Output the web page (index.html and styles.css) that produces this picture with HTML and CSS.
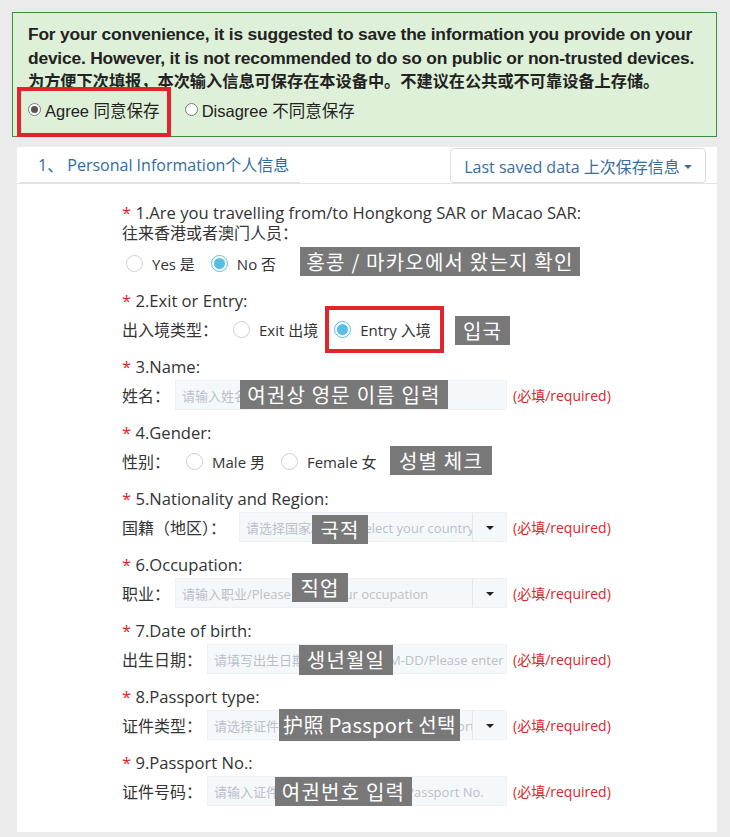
FILE: index.html
```html
<!DOCTYPE html>
<html lang="zh-CN">
<head>
<meta charset="utf-8">
<title>Personal Information</title>
<link rel="stylesheet" href="styles.css">
</head>
<body>
<div class="page">
  <div class="notice">
    <p class="notice-text"><span class="en">For your convenience, it is suggested to save the information you provide on your device. However, it is not recommended to do so on public or non-trusted devices.</span><br><span class="zh">为方便下次填报，本次输入信息可保存在本设备中。不建议在公共或不可靠设备上存储。</span></p>
    <div class="notice-radios">
      <label class="nradio"><span class="ndot on"></span>Agree 同意保存</label>
      <label class="nradio"><span class="ndot"></span>Disagree 不同意保存</label>
    </div>
  </div>

  <div class="panel">
    <div class="panel-head">
      <div class="tab">1、 Personal Information个人信息</div>
      <button class="saved-btn">Last saved data 上次保存信息 <span class="caret"></span></button>
    </div>

    <div class="form">
      <div class="q">
        <div class="qlabel two"><span class="star">*</span> 1.Are you travelling from/to Hongkong SAR or Macao SAR:<br><span class="zhl">往来香港或者澳门人员：</span></div>
        <div class="row">
          <label class="radio"><span class="circle"></span>Yes 是</label>
          <label class="radio"><span class="circle on"></span>No 否</label>
        </div>
      </div>

      <div class="q">
        <div class="qlabel"><span class="star">*</span> 2.Exit or Entry:</div>
        <div class="row">
          <span class="rlabel wide">出入境类型：</span>
          <label class="radio"><span class="circle"></span>Exit 出境</label>
          <label class="radio"><span class="circle on"></span>Entry 入境</label>
        </div>
      </div>

      <div class="q">
        <div class="qlabel"><span class="star">*</span> 3.Name:</div>
        <div class="row">
          <div class="fieldline">
            <span class="flabel">姓名：</span>
            <div class="input"><span class="ph">请输入姓名/Please enter your name</span></div>
          </div>
          <span class="req">(必填/required)</span>
        </div>
      </div>

      <div class="q">
        <div class="qlabel"><span class="star">*</span> 4.Gender:</div>
        <div class="row">
          <span class="rlabel">性别：</span>
          <label class="radio"><span class="circle"></span>Male 男</label>
          <label class="radio"><span class="circle"></span>Female 女</label>
        </div>
      </div>

      <div class="q">
        <div class="qlabel"><span class="star">*</span> 5.Nationality and Region:</div>
        <div class="row">
          <div class="fieldline">
            <span class="flabel loose">国籍（地区）：</span>
            <div class="input select"><span class="ph">请选择国家/Please select your country</span><span class="dd"><span class="caret dark"></span></span></div>
          </div>
          <span class="req">(必填/required)</span>
        </div>
      </div>

      <div class="q">
        <div class="qlabel"><span class="star">*</span> 6.Occupation:</div>
        <div class="row">
          <div class="fieldline">
            <span class="flabel">职业：</span>
            <div class="input select"><span class="ph">请输入职业/Please enter your occupation</span><span class="dd"><span class="caret dark"></span></span></div>
          </div>
          <span class="req">(必填/required)</span>
        </div>
      </div>

      <div class="q">
        <div class="qlabel"><span class="star">*</span> 7.Date of birth:</div>
        <div class="row">
          <div class="fieldline">
            <span class="flabel">出生日期：</span>
            <div class="input"><span class="ph">请填写出生日期，格式YYYY-MM-DD/Please enter your date of birth</span></div>
          </div>
          <span class="req">(必填/required)</span>
        </div>
      </div>

      <div class="q">
        <div class="qlabel"><span class="star">*</span> 8.Passport type:</div>
        <div class="row">
          <div class="fieldline">
            <span class="flabel">证件类型：</span>
            <div class="input select"><span class="ph">请选择证件类型/Please select your passport type</span><span class="dd"><span class="caret dark"></span></span></div>
          </div>
          <span class="req">(必填/required)</span>
        </div>
      </div>

      <div class="q">
        <div class="qlabel"><span class="star">*</span> 9.Passport No.:</div>
        <div class="row">
          <div class="fieldline">
            <span class="flabel">证件号码：</span>
            <div class="input"><span class="ph">请输入证件号/Please enter your Passport No.</span></div>
          </div>
          <span class="req">(必填/required)</span>
        </div>
      </div>
    </div>
  </div>

  <!-- annotation layer -->
  <div class="mark mark-agree"></div>
  <div class="mark mark-entry"></div>
  <div class="tag tag1">홍콩 / 마카오에서 왔는지 확인</div>
  <div class="tag tag2">입국</div>
  <div class="tag tag3">여권상 영문 이름 입력</div>
  <div class="tag tag4">성별 체크</div>
  <div class="tag tag5">국적</div>
  <div class="tag tag6">직업</div>
  <div class="tag tag7">생년월일</div>
  <div class="tag tag8">护照 Passport 선택</div>
  <div class="tag tag9">여권번호 입력</div>
</div>
</body>
</html>
```

FILE: styles.css
```css
* { box-sizing: border-box; }
html, body { margin: 0; padding: 0; }
body {
  background: #ebebeb;
  font-family: "Open Sans", "Noto Sans CJK SC", sans-serif;
  color: #333;
  width: 730px;
  height: 837px;
  overflow: hidden;
}
.page {
  position: relative;
  padding: 12px 13px 0 12px;
}

/* notice */
.notice {
  height: 125px;
  border: 1px solid #3e8e3e;
  background: #dff0d8;
  padding: 10px 8px 0 15px;
}
.notice-text {
  margin: 0;
  font-family: "Liberation Sans", "Noto Sans CJK SC", sans-serif;
  font-weight: bold;
  line-height: 22.5px;
  color: #222;
}
.notice-text .en {
  font-size: 17.4px;
  letter-spacing: -0.2px;
}
.notice-text .zh {
  font-size: 16.2px;
}
.notice-radios {
  display: flex;
  align-items: center;
  margin-top: 5px;
  height: 22px;
  font-family: "Liberation Sans", "Noto Sans CJK SC", sans-serif;
  font-size: 16.5px;
  color: #222;
}
.nradio {
  display: flex;
  align-items: center;
  margin-right: 25px;
}
.ndot {
  width: 13px;
  height: 13px;
  border-radius: 50%;
  border: 1px solid #7a7a7a;
  background: #fff;
  margin-right: 4px;
  position: relative;
}
.ndot.on::after {
  content: "";
  position: absolute;
  left: 2px; top: 2px;
  width: 7px; height: 7px;
  border-radius: 50%;
  background: #555;
}

/* panel */
.panel {
  margin: 10px 0 0 5px;
  width: 700px;
  height: 685px;
  background: #fff;
}
.panel-head {
  height: 37px;
  border-bottom: 1px solid #e3e3e3;
  display: flex;
  justify-content: space-between;
  align-items: flex-start;
}
.tab {
  margin-left: 3px;
  width: 280px;
  height: 36px;
  padding: 5px 0 0 18px;
  border-bottom: 1px solid #d9e0e7;
  color: #2e6da4;
  font-size: 16px;
}
.saved-btn {
  margin: 1px 11px 0 0;
  width: 256px;
  height: 35px;
  border: 1px solid #dcdcdc;
  border-radius: 4px;
  background: #fff;
  color: #3a6d9e;
  font-family: "Open Sans", "Noto Sans CJK SC", sans-serif;
  font-size: 16px;
  padding: 0;
  display: flex;
  align-items: center;
  justify-content: center;
  gap: 4px;
}
.caret {
  display: inline-block;
  width: 0; height: 0;
  border-left: 4px solid transparent;
  border-right: 4px solid transparent;
  border-top: 4px solid #3a6d9e;
  margin-top: 2px;
}
.caret.dark { border-top-color: #222; }

/* form */
.form {
  padding: 19px 0 0 105px;
  font-size: 16px;
}
.q { margin-bottom: 10px; }
.qlabel {
  line-height: 22px;
  height: 22px;
  font-size: 16.6px;
  color: #333;
  white-space: nowrap;
}
.qlabel.two {
  line-height: 20px;
  height: 43px;
}
.zhl { font-size: 16px; }
.star { color: #d9262b; }
.row {
  height: 34px;
  display: flex;
  align-items: center;
  white-space: nowrap;
}
.rlabel { margin-right: 12px; }
.rlabel.wide { margin-right: 11px; }
.radio {
  display: flex;
  align-items: center;
  margin-right: 12px;
  font-size: 15px;
  margin-left: 4px;
}
.circle {
  width: 17px; height: 17px;
  border-radius: 50%;
  border: 1px solid #cfcfcf;
  background: #fff;
  margin-right: 9px;
  position: relative;
}
.circle.on { border-color: #5bbde4; }
.circle.on::after {
  content: "";
  position: absolute;
  left: 2px; top: 2px;
  width: 11px; height: 11px;
  border-radius: 50%;
  background: #5bbde4;
}
.fieldline {
  width: 385px;
  display: flex;
  align-items: center;
}
.flabel { margin-right: 5px; flex: none; }
.flabel.loose { margin-right: 13px; }
.input {
  flex: 1;
  height: 30px;
  background: #f5f8fb;
  border: 1px solid #edf1f5;
  display: flex;
  align-items: center;
  overflow: hidden;
  min-width: 0;
}
.ph {
  flex: 1;
  min-width: 0;
  padding-left: 6px;
  font-size: 13px;
  color: #b9c0ca;
  white-space: nowrap;
  overflow: hidden;
}
.dd {
  flex: none;
  width: 34px;
  height: 28px;
  border-left: 1px solid #e2e6ea;
  display: flex;
  align-items: center;
  justify-content: center;
}
.req {
  margin-left: 6px;
  color: #d9262b;
  font-size: 14px;
}

/* annotation layer */
.mark {
  position: absolute;
  border: 4px solid #e2242b;
}
.mark-agree { left: 17px; top: 87px; width: 154px; height: 50px; }
.mark-entry { left: 325px; top: 306px; width: 119px; height: 47px; }
.tag {
  position: absolute;
  background: #787878;
  color: #fff;
  font-family: "Noto Sans CJK KR", "Noto Sans CJK SC", sans-serif;
  font-size: 20px;
  line-height: 29px;
  height: 29px;
  text-align: center;
  white-space: nowrap;
  letter-spacing: 1.2px;
}
.tag1 { left: 300px; top: 247px; width: 280px; }
.tag2 { left: 455px; top: 316px; width: 55px; }
.tag3 { left: 240px; top: 380px; width: 208px; }
.tag4 { left: 390px; top: 446px; width: 102px; }
.tag5 { left: 312px; top: 515px; width: 56px; }
.tag6 { left: 292px; top: 573px; width: 56px; }
.tag7 { left: 299px; top: 645px; width: 94px; height: 30px; }
.tag8 { left: 279px; top: 709px; width: 181px; height: 32px; line-height: 32px; letter-spacing: 0.4px; }
.tag9 { left: 275px; top: 777px; width: 137px; }
```
